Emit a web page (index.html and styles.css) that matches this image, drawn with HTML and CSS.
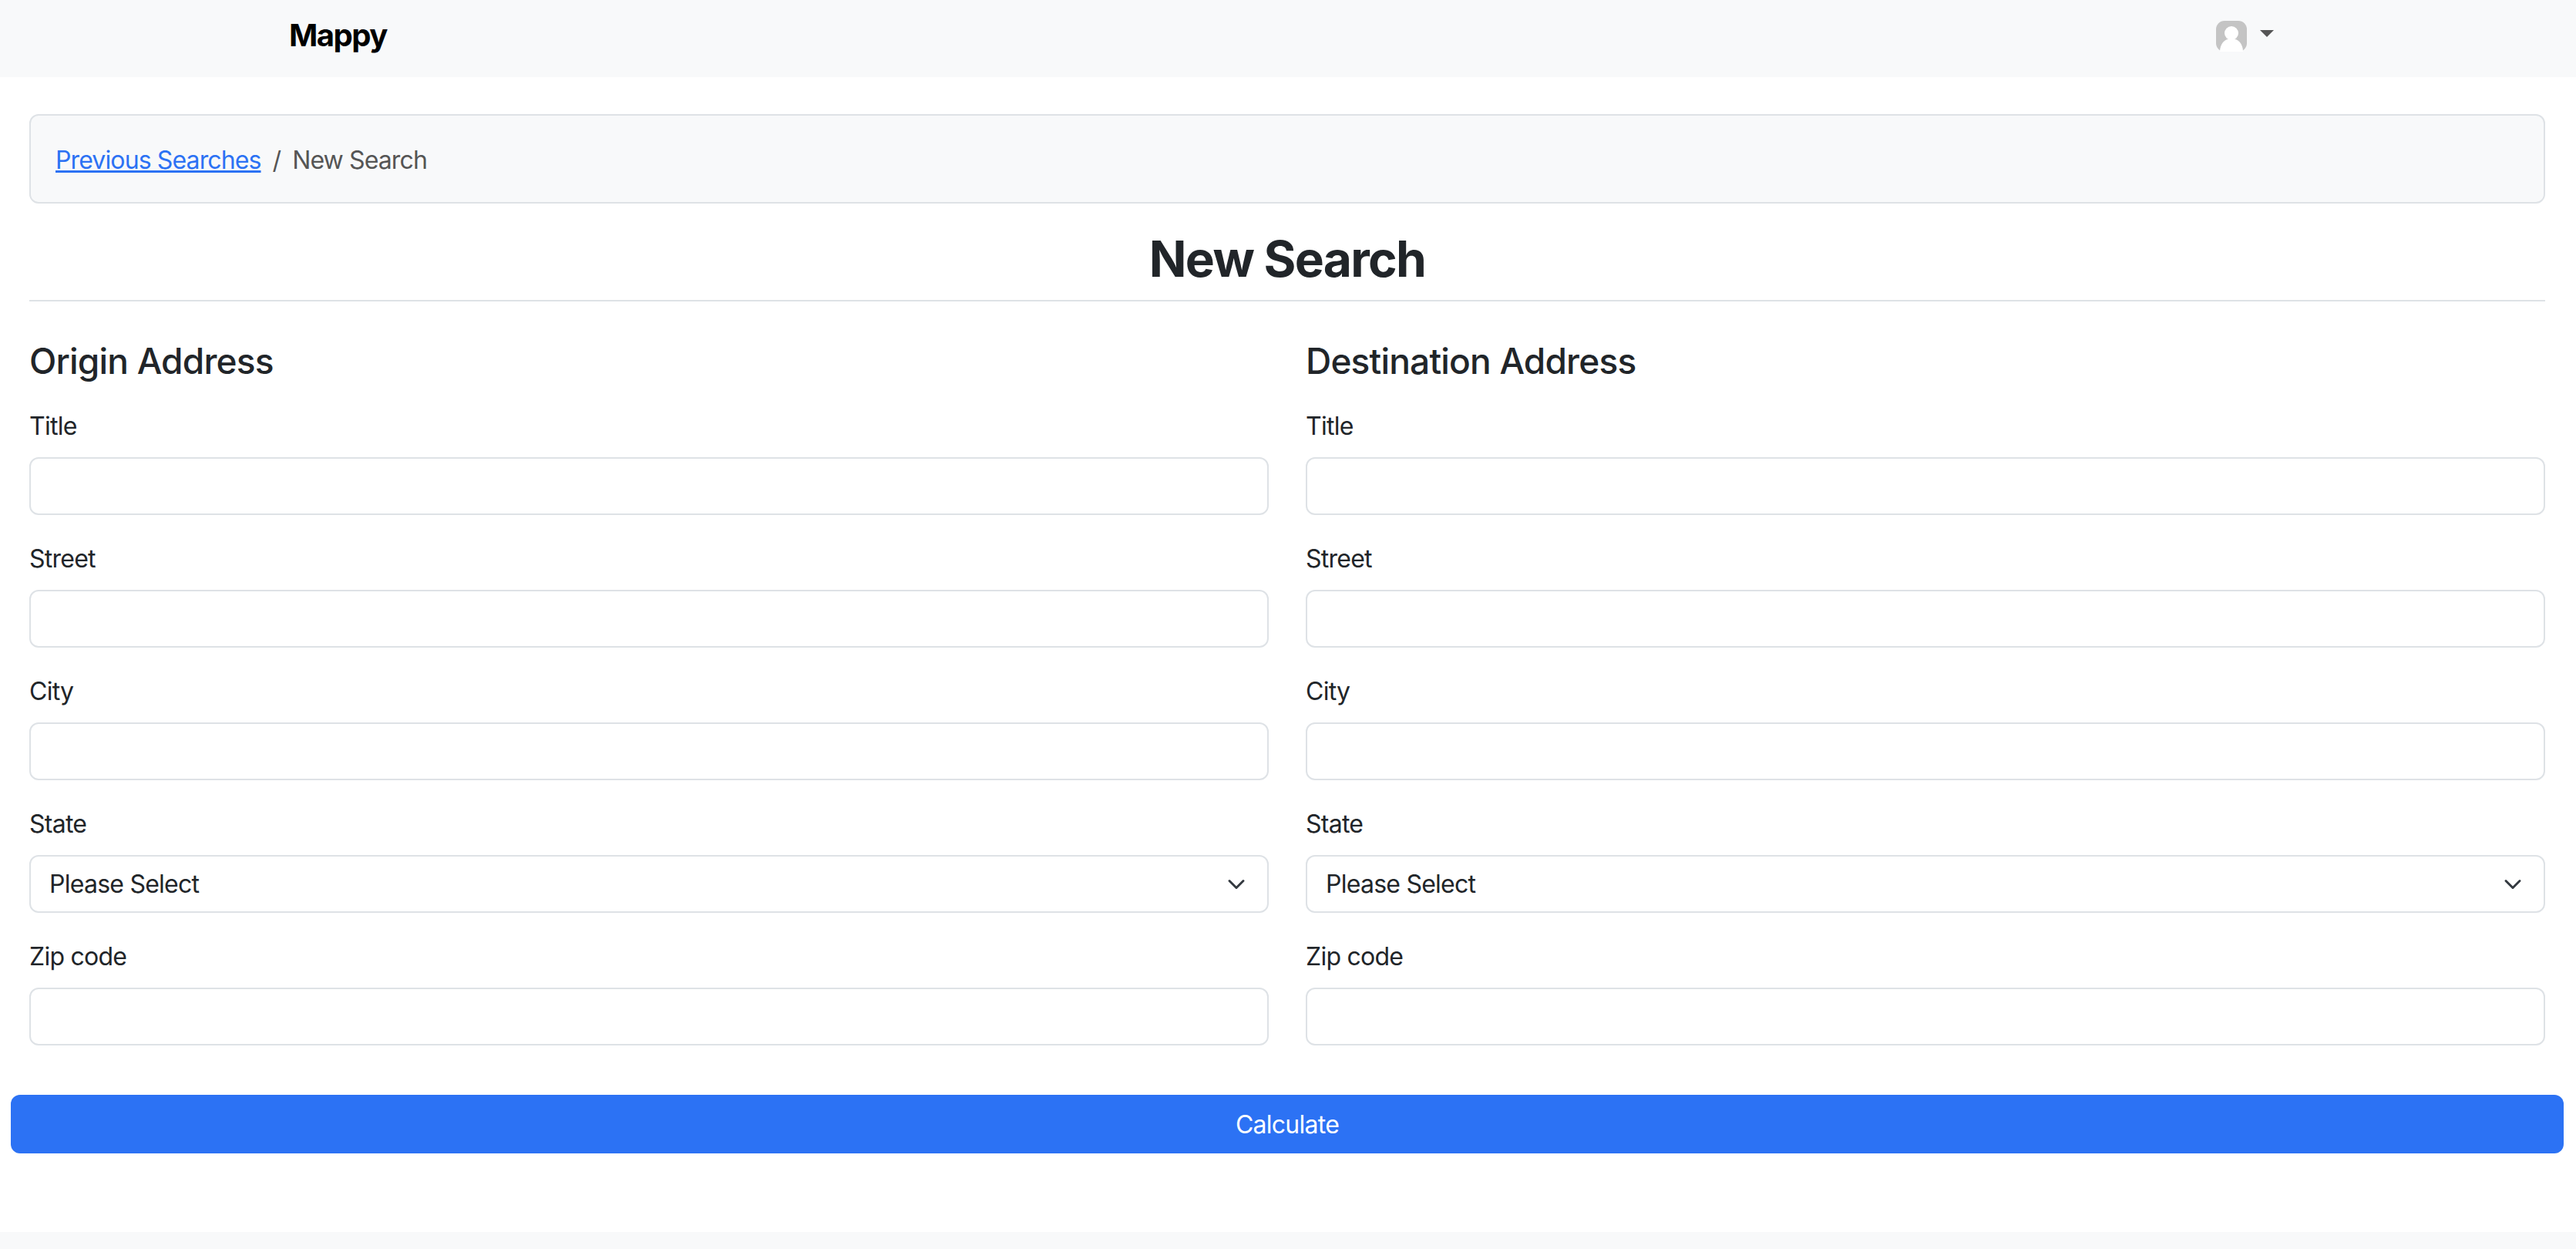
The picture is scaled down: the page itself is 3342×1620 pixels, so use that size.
FILE: index.html
```html
<!DOCTYPE html>
<html lang="en">
<head>
  <meta charset="UTF-8" />
  <title>Mappy</title>
  <link rel="stylesheet" href="styles.css">
</head>
<body>

  <nav class="navbar">
    <a class="brand" href="#">Mappy</a>
    <a class="user-menu" href="#">
      <svg class="avatar" viewBox="0 0 40 40" width="40" height="40">
        <rect width="40" height="40" rx="11" fill="#c4c4c4" />
        <circle cx="20" cy="16" r="9" fill="#fff" />
        <path d="M5 40c0-10 6-17 15-17s15 7 15 17z" fill="#fff" />
      </svg>
      <span class="caret"></span>
    </a>
  </nav>

  <main class="content">
    <div class="breadcrumb">
      <a href="#">Previous Searches</a>
      <span class="divider">/</span>
      <span class="current">New Search</span>
    </div>

    <h1 class="page-title">New Search</h1>

    <form>
      <div class="columns">
        <section>
          <h3>Origin Address</h3>
          <div class="form-group">
            <label for="origin_title">Title</label>
            <input type="text" id="origin_title" />
          </div>
          <div class="form-group">
            <label for="origin_street">Street</label>
            <input type="text" id="origin_street" />
          </div>
          <div class="form-group">
            <label for="origin_city">City</label>
            <input type="text" id="origin_city" />
          </div>
          <div class="form-group">
            <label for="origin_state">State</label>
            <select id="origin_state"><option>Please Select</option></select>
          </div>
          <div class="form-group">
            <label for="origin_zip">Zip code</label>
            <input type="text" id="origin_zip" />
          </div>
        </section>

        <section>
          <h3>Destination Address</h3>
          <div class="form-group">
            <label for="dest_title">Title</label>
            <input type="text" id="dest_title" />
          </div>
          <div class="form-group">
            <label for="dest_street">Street</label>
            <input type="text" id="dest_street" />
          </div>
          <div class="form-group">
            <label for="dest_city">City</label>
            <input type="text" id="dest_city" />
          </div>
          <div class="form-group">
            <label for="dest_state">State</label>
            <select id="dest_state"><option>Please Select</option></select>
          </div>
          <div class="form-group">
            <label for="dest_zip">Zip code</label>
            <input type="text" id="dest_zip" />
          </div>
        </section>
      </div>

      <button type="submit">Calculate</button>
    </form>
  </main>

  <footer class="footer"></footer>

</body>
</html>
```

FILE: styles.css
```css
* {
  box-sizing: border-box;
}
html, body {
  height: 100%;
}
body {
  margin: 0;
  display: flex;
  flex-direction: column;
  font-family: Inter, 'Liberation Sans', sans-serif;
  font-size: 32px;
  line-height: 48px;
  letter-spacing: -0.75px;
  color: #212529;
  background: #fff;
}
.navbar {
  flex: none;
  height: 100px;
  padding: 0 392px 6px 375px;
  display: flex;
  align-items: center;
  justify-content: space-between;
  background: #f8f9fa;
}
.brand {
  margin-bottom: 3px;
  font-size: 40px;
  font-weight: 700;
  letter-spacing: -1.5px;
  color: #000;
  text-decoration: none;
}
.user-menu {
  display: flex;
  align-items: center;
  gap: 17px;
}
.avatar {
  display: block;
}
.caret {
  width: 0;
  height: 0;
  margin-bottom: 8px;
  border-top: 9px solid #555;
  border-left: 9px solid transparent;
  border-right: 9px solid transparent;
}
.content {
  flex: 1;
  padding: 48px 16px 0 14px;
}
.breadcrumb {
  margin: 0 24px;
  height: 116px;
  padding: 4px 32px 0;
  display: flex;
  align-items: center;
  gap: 15px;
  background: #f8f9fa;
  border: 2px solid #dee2e6;
  border-radius: 12px;
  letter-spacing: -0.88px;
  color: #555;
}
.breadcrumb a {
  color: #2c72f4;
}
.page-title {
  margin: 0 24px 32px;
  height: 127px;
  padding-top: 24px;
  border-bottom: 2px solid #dee2e6;
  font-size: 64px;
  line-height: 96px;
  font-weight: 700;
  letter-spacing: -1.7px;
  text-align: center;
}
.columns {
  margin: 0 24px;
  display: grid;
  grid-template-columns: 1fr 1fr;
  column-gap: 48px;
}
h3 {
  margin: 3px 0 19px;
  font-size: 46px;
  line-height: 84px;
  font-weight: 500;
  letter-spacing: -0.8px;
}
.form-group {
  margin-bottom: 33px;
}
label {
  display: block;
  margin-bottom: 16px;
}
input, select {
  display: block;
  width: 100%;
  height: 75px;
  padding: 0 24px;
  font: inherit;
  letter-spacing: inherit;
  color: #212529;
  background-color: #fff;
  border: 2px solid #dee2e6;
  border-radius: 12px;
}
select {
  appearance: none;
  background-image: url("data:image/svg+xml,%3csvg xmlns='http://www.w3.org/2000/svg' viewBox='0 0 16 16'%3e%3cpath fill='none' stroke='%23343a40' stroke-linecap='round' stroke-linejoin='round' stroke-width='2' d='M2 5l6 6 6-6'/%3e%3c/svg%3e");
  background-repeat: no-repeat;
  background-position: right 28px center;
  background-size: 24px 24px;
}
button {
  display: block;
  width: 100%;
  height: 76px;
  margin-top: 31px;
  padding-top: 2px;
  font: inherit;
  letter-spacing: inherit;
  color: #fff;
  background-color: #2c72f4;
  border: none;
  border-radius: 12px;
}
.footer {
  flex: none;
  height: 22px;
  background: #f8f9fa;
}
```
